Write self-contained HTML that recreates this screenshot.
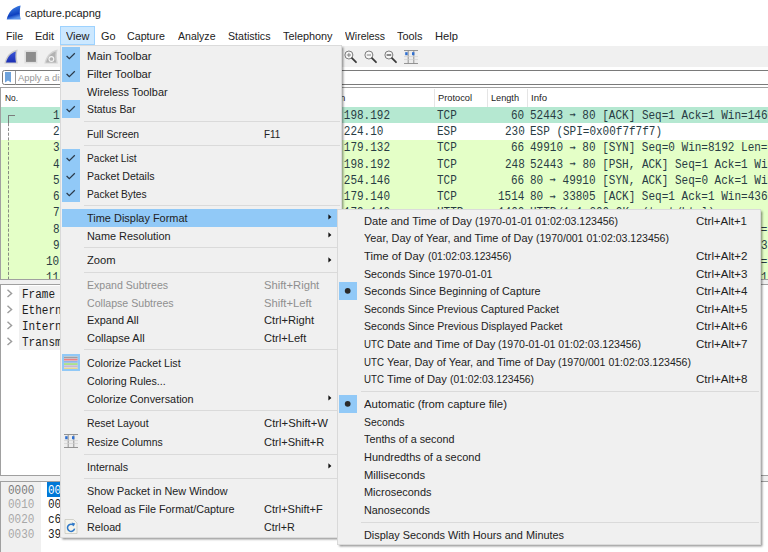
<!DOCTYPE html>
<html lang="en"><head><meta charset="utf-8"><title>capture.pcapng</title>
<style>
html,body{margin:0;padding:0}
body{width:768px;height:552px;overflow:hidden;position:relative;background:#fff;font-family:"Liberation Sans", sans-serif;font-size:12px}
.b{position:absolute;display:block}
.t{position:absolute;white-space:pre;line-height:1;transform-origin:0 0}
.ar{font-family:"DejaVu Sans Mono",monospace;font-size:11px;line-height:0;position:relative;top:-0.5px}
</style></head><body>
<svg class="b" style="left:0;top:0" width="30" height="26" viewBox="0 0 30 26"><defs><linearGradient id="fg" x1="0" y1="0" x2="0.3" y2="1"><stop offset="0" stop-color="#4f95ee"/><stop offset="0.75" stop-color="#0d3fc0"/><stop offset="1" stop-color="#5b93ea"/></linearGradient></defs><path d="M6.7 19.6 C8.2 12.5 12.5 7 20.6 5.4 C19.6 9.5 19.4 14.5 20.8 19.6 Z" fill="url(#fg)"/></svg>
<span class="t" style="left:25.00px;top:7.64px;font-size:11.2px;color:#222;transform:scale(0.9852,1.040);">capture.pcapng</span>
<div class="b" style="left:60.00px;top:26.10px;width:35.00px;height:19.20px;background:#cce8ff;box-shadow:inset 0 0 0 1px #9dd2ff;"></div>
<span class="t" style="left:6.00px;top:31.04px;font-size:11.2px;color:#222;transform:scale(0.9428,1.040);">File</span>
<span class="t" style="left:35.00px;top:31.04px;font-size:11.2px;color:#222;transform:scale(0.9854,1.040);">Edit</span>
<span class="t" style="left:65.50px;top:31.04px;font-size:11.2px;color:#222;transform:scale(0.9773,1.040);">View</span>
<span class="t" style="left:101.00px;top:31.04px;font-size:11.2px;color:#222;transform:scale(0.9707,1.040);">Go</span>
<span class="t" style="left:127.00px;top:31.04px;font-size:11.2px;color:#222;transform:scale(0.9545,1.040);">Capture</span>
<span class="t" style="left:177.50px;top:31.04px;font-size:11.2px;color:#222;transform:scale(0.9419,1.040);">Analyze</span>
<span class="t" style="left:227.50px;top:31.04px;font-size:11.2px;color:#222;transform:scale(0.9494,1.040);">Statistics</span>
<span class="t" style="left:282.50px;top:31.04px;font-size:11.2px;color:#222;transform:scale(0.9703,1.040);">Telephony</span>
<span class="t" style="left:344.50px;top:31.04px;font-size:11.2px;color:#222;transform:scale(0.9326,1.040);">Wireless</span>
<span class="t" style="left:397.00px;top:31.04px;font-size:11.2px;color:#222;transform:scale(0.9761,1.040);">Tools</span>
<span class="t" style="left:434.50px;top:31.04px;font-size:11.2px;color:#222;transform:scale(0.9993,1.040);">Help</span>
<div class="b" style="left:0.00px;top:45.80px;width:768.00px;height:21.40px;background:#f0f0f0;"></div>
<div class="b" style="left:1.60px;top:69.90px;width:790.00px;height:15.20px;background:#fff;border:1px solid #7a7a7a;border-radius:2.5px;box-sizing:border-box;"></div>
<div class="b" style="left:15.20px;top:70.50px;width:0.80px;height:14.00px;background:#9a9a9a;"></div>
<svg class="b" style="left:5px;top:72.3px" width="6" height="10.5" viewBox="0 0 6 10.5"><path d="M0 0H6V10.5L3 8.6L0 10.5Z" fill="#6fa3dc"/></svg>
<span class="t" style="left:17.90px;top:73.62px;font-size:9.2px;color:#979797;transform:scale(1.0242,1.040);">Apply a display filter</span>
<div class="b" style="left:0.00px;top:86.80px;width:768.00px;height:0.90px;background:#a0a0a0;"></div>
<div class="b" style="left:0.00px;top:87.60px;width:768.00px;height:192.00px;background:#fff;"></div>
<div class="b" style="left:1.00px;top:107.25px;width:767.00px;height:15.75px;background:#b5e8d1;"></div>
<div class="b" style="left:1.00px;top:122.90px;width:767.00px;height:17.10px;background:#ffffff;"></div>
<div class="b" style="left:1.00px;top:139.90px;width:767.00px;height:16.20px;background:#e4ffc7;"></div>
<div class="b" style="left:1.00px;top:156.00px;width:767.00px;height:16.35px;background:#e4ffc7;"></div>
<div class="b" style="left:1.00px;top:172.25px;width:767.00px;height:16.35px;background:#e4ffc7;"></div>
<div class="b" style="left:1.00px;top:188.50px;width:767.00px;height:16.35px;background:#e4ffc7;"></div>
<div class="b" style="left:1.00px;top:204.75px;width:767.00px;height:16.35px;background:#e4ffc7;"></div>
<div class="b" style="left:1.00px;top:221.00px;width:767.00px;height:16.35px;background:#e4ffc7;"></div>
<div class="b" style="left:1.00px;top:237.25px;width:767.00px;height:16.35px;background:#e4ffc7;"></div>
<div class="b" style="left:1.00px;top:253.50px;width:767.00px;height:16.35px;background:#e4ffc7;"></div>
<div class="b" style="left:1.00px;top:269.75px;width:767.00px;height:16.35px;background:#e4ffc7;"></div>
<div class="b" style="left:0.00px;top:86.80px;width:1.20px;height:193.00px;background:#a0a0a0;"></div>
<span class="t" style="left:5.00px;top:93.62px;font-size:9.2px;color:#222;transform:scale(0.9083,1.040);">No.</span>
<span class="t" style="left:300.00px;top:93.62px;font-size:9.2px;color:#222;transform:scale(0.9855,1.040);">Destination</span>
<span class="t" style="left:438.00px;top:93.62px;font-size:9.2px;color:#222;transform:scale(1.0083,1.040);">Protocol</span>
<span class="t" style="left:491.00px;top:93.62px;font-size:9.2px;color:#222;transform:scale(0.9961,1.040);">Length</span>
<span class="t" style="left:531.00px;top:93.62px;font-size:9.2px;color:#222;transform:scale(1.0438,1.040);">Info</span>
<div class="b" style="left:434.00px;top:88.50px;width:0.80px;height:18.00px;background:#e5e5e5;"></div>
<div class="b" style="left:486.80px;top:88.50px;width:0.80px;height:18.00px;background:#e5e5e5;"></div>
<div class="b" style="left:527.00px;top:88.50px;width:0.80px;height:18.00px;background:#e5e5e5;"></div>
<span class="t" style="left:53.00px;top:109.85px;font-size:12px;color:#283c44;font-family:'Liberation Mono', monospace;transform:scale(0.9163,1.000);">1</span>
<span class="t" style="left:291.00px;top:109.85px;font-size:12px;color:#283c44;font-family:'Liberation Mono', monospace;transform:scale(0.9164,1.000);">192.168.198.192</span>
<span class="t" style="left:436.60px;top:109.85px;font-size:12px;color:#283c44;font-family:'Liberation Mono', monospace;transform:scale(0.9163,1.000);">TCP</span>
<span class="t" style="left:511.40px;top:109.85px;font-size:12px;color:#283c44;font-family:'Liberation Mono', monospace;transform:scale(0.9163,1.000);">60</span>
<span class="t" style="left:529.60px;top:109.85px;font-size:12px;color:#283c44;font-family:'Liberation Mono', monospace;transform:scale(0.9181,1.000);">52443 <span class="ar">→</span> 80 [ACK] Seq=1 Ack=1 Win=14600 Len=0</span>
<span class="t" style="left:53.00px;top:126.10px;font-size:12px;color:#283c44;font-family:'Liberation Mono', monospace;transform:scale(0.9163,1.000);">2</span>
<span class="t" style="left:291.00px;top:126.10px;font-size:12px;color:#283c44;font-family:'Liberation Mono', monospace;transform:scale(0.9164,1.000);">192.168.224.10 </span>
<span class="t" style="left:436.60px;top:126.10px;font-size:12px;color:#283c44;font-family:'Liberation Mono', monospace;transform:scale(0.9163,1.000);">ESP</span>
<span class="t" style="left:504.80px;top:126.10px;font-size:12px;color:#283c44;font-family:'Liberation Mono', monospace;transform:scale(0.9163,1.000);">230</span>
<span class="t" style="left:529.60px;top:126.10px;font-size:12px;color:#283c44;font-family:'Liberation Mono', monospace;transform:scale(0.9165,1.000);">ESP (SPI=0x00f7f7f7)</span>
<span class="t" style="left:53.00px;top:142.35px;font-size:12px;color:#283c44;font-family:'Liberation Mono', monospace;transform:scale(0.9163,1.000);">3</span>
<span class="t" style="left:291.00px;top:142.35px;font-size:12px;color:#283c44;font-family:'Liberation Mono', monospace;transform:scale(0.9164,1.000);">192.168.179.132</span>
<span class="t" style="left:436.60px;top:142.35px;font-size:12px;color:#283c44;font-family:'Liberation Mono', monospace;transform:scale(0.9163,1.000);">TCP</span>
<span class="t" style="left:511.40px;top:142.35px;font-size:12px;color:#283c44;font-family:'Liberation Mono', monospace;transform:scale(0.9163,1.000);">66</span>
<span class="t" style="left:529.60px;top:142.35px;font-size:12px;color:#283c44;font-family:'Liberation Mono', monospace;transform:scale(0.9180,1.000);">49910 <span class="ar">→</span> 80 [SYN] Seq=0 Win=8192 Len=0 MSS=1460</span>
<span class="t" style="left:53.00px;top:158.60px;font-size:12px;color:#283c44;font-family:'Liberation Mono', monospace;transform:scale(0.9163,1.000);">4</span>
<span class="t" style="left:291.00px;top:158.60px;font-size:12px;color:#283c44;font-family:'Liberation Mono', monospace;transform:scale(0.9164,1.000);">192.168.198.192</span>
<span class="t" style="left:436.60px;top:158.60px;font-size:12px;color:#283c44;font-family:'Liberation Mono', monospace;transform:scale(0.9163,1.000);">TCP</span>
<span class="t" style="left:504.80px;top:158.60px;font-size:12px;color:#283c44;font-family:'Liberation Mono', monospace;transform:scale(0.9163,1.000);">248</span>
<span class="t" style="left:529.60px;top:158.60px;font-size:12px;color:#283c44;font-family:'Liberation Mono', monospace;transform:scale(0.9182,1.000);">52443 <span class="ar">→</span> 80 [PSH, ACK] Seq=1 Ack=1 Win=14600</span>
<span class="t" style="left:53.00px;top:174.85px;font-size:12px;color:#283c44;font-family:'Liberation Mono', monospace;transform:scale(0.9163,1.000);">5</span>
<span class="t" style="left:291.00px;top:174.85px;font-size:12px;color:#283c44;font-family:'Liberation Mono', monospace;transform:scale(0.9164,1.000);">192.168.254.146</span>
<span class="t" style="left:436.60px;top:174.85px;font-size:12px;color:#283c44;font-family:'Liberation Mono', monospace;transform:scale(0.9163,1.000);">TCP</span>
<span class="t" style="left:511.40px;top:174.85px;font-size:12px;color:#283c44;font-family:'Liberation Mono', monospace;transform:scale(0.9163,1.000);">66</span>
<span class="t" style="left:529.60px;top:174.85px;font-size:12px;color:#283c44;font-family:'Liberation Mono', monospace;transform:scale(0.9182,1.000);">80 <span class="ar">→</span> 49910 [SYN, ACK] Seq=0 Ack=1 Win=14600</span>
<span class="t" style="left:53.00px;top:191.10px;font-size:12px;color:#283c44;font-family:'Liberation Mono', monospace;transform:scale(0.9163,1.000);">6</span>
<span class="t" style="left:291.00px;top:191.10px;font-size:12px;color:#283c44;font-family:'Liberation Mono', monospace;transform:scale(0.9164,1.000);">192.168.179.140</span>
<span class="t" style="left:436.60px;top:191.10px;font-size:12px;color:#283c44;font-family:'Liberation Mono', monospace;transform:scale(0.9163,1.000);">TCP</span>
<span class="t" style="left:498.20px;top:191.10px;font-size:12px;color:#283c44;font-family:'Liberation Mono', monospace;transform:scale(0.9163,1.000);">1514</span>
<span class="t" style="left:529.60px;top:191.10px;font-size:12px;color:#283c44;font-family:'Liberation Mono', monospace;transform:scale(0.9181,1.000);">80 <span class="ar">→</span> 33805 [ACK] Seq=1 Ack=1 Win=4360 Len=1460</span>
<span class="t" style="left:53.00px;top:207.35px;font-size:12px;color:#283c44;font-family:'Liberation Mono', monospace;transform:scale(0.9163,1.000);">7</span>
<span class="t" style="left:291.00px;top:207.35px;font-size:12px;color:#283c44;font-family:'Liberation Mono', monospace;transform:scale(0.9164,1.000);">192.168.179.140</span>
<span class="t" style="left:436.60px;top:207.35px;font-size:12px;color:#283c44;font-family:'Liberation Mono', monospace;transform:scale(0.9163,1.000);">HTTP</span>
<span class="t" style="left:498.20px;top:207.35px;font-size:12px;color:#283c44;font-family:'Liberation Mono', monospace;transform:scale(0.9163,1.000);">1400</span>
<span class="t" style="left:529.60px;top:207.35px;font-size:12px;color:#283c44;font-family:'Liberation Mono', monospace;transform:scale(0.9165,1.000);">HTTP/1.1 200 OK  (text/html)</span>
<span class="t" style="left:53.00px;top:223.60px;font-size:12px;color:#283c44;font-family:'Liberation Mono', monospace;transform:scale(0.9163,1.000);">8</span>
<span class="t" style="left:291.00px;top:223.60px;font-size:12px;color:#283c44;font-family:'Liberation Mono', monospace;transform:scale(0.9164,1.000);">192.168.179.132</span>
<span class="t" style="left:436.60px;top:223.60px;font-size:12px;color:#283c44;font-family:'Liberation Mono', monospace;transform:scale(0.9163,1.000);">TCP</span>
<span class="t" style="left:511.40px;top:223.60px;font-size:12px;color:#283c44;font-family:'Liberation Mono', monospace;transform:scale(0.9163,1.000);">66</span>
<span class="t" style="left:529.60px;top:223.60px;font-size:12px;color:#283c44;font-family:'Liberation Mono', monospace;transform:scale(0.9180,1.000);">80 <span class="ar">→</span> 49910 [ACK] Seq=1 Ack=3790 Win=15544 Len=0</span>
<span class="t" style="left:53.00px;top:239.85px;font-size:12px;color:#283c44;font-family:'Liberation Mono', monospace;transform:scale(0.9163,1.000);">9</span>
<span class="t" style="left:291.00px;top:239.85px;font-size:12px;color:#283c44;font-family:'Liberation Mono', monospace;transform:scale(0.9164,1.000);">192.168.254.146</span>
<span class="t" style="left:436.60px;top:239.85px;font-size:12px;color:#283c44;font-family:'Liberation Mono', monospace;transform:scale(0.9163,1.000);">HTTP</span>
<span class="t" style="left:504.80px;top:239.85px;font-size:12px;color:#283c44;font-family:'Liberation Mono', monospace;transform:scale(0.9163,1.000);">431</span>
<span class="t" style="left:529.60px;top:239.85px;font-size:12px;color:#283c44;font-family:'Liberation Mono', monospace;transform:scale(0.9165,1.000);">GET /images/layout/logo.png?v=1.2.13 HTTP/1.1</span>
<span class="t" style="left:46.40px;top:256.10px;font-size:12px;color:#283c44;font-family:'Liberation Mono', monospace;transform:scale(0.9163,1.000);">10</span>
<span class="t" style="left:291.00px;top:256.10px;font-size:12px;color:#283c44;font-family:'Liberation Mono', monospace;transform:scale(0.9164,1.000);">192.168.179.132</span>
<span class="t" style="left:436.60px;top:256.10px;font-size:12px;color:#283c44;font-family:'Liberation Mono', monospace;transform:scale(0.9163,1.000);">TCP</span>
<span class="t" style="left:511.40px;top:256.10px;font-size:12px;color:#283c44;font-family:'Liberation Mono', monospace;transform:scale(0.9163,1.000);">54</span>
<span class="t" style="left:529.60px;top:256.10px;font-size:12px;color:#283c44;font-family:'Liberation Mono', monospace;transform:scale(0.9180,1.000);">80 <span class="ar">→</span> 49910 [ACK] Seq=1 Ack=7580 Win=16616 Len=0</span>
<span class="t" style="left:46.40px;top:272.35px;font-size:12px;color:#283c44;font-family:'Liberation Mono', monospace;transform:scale(0.9163,1.000);">11</span>
<span class="t" style="left:291.00px;top:272.35px;font-size:12px;color:#283c44;font-family:'Liberation Mono', monospace;transform:scale(0.9164,1.000);">192.168.179.140</span>
<span class="t" style="left:436.60px;top:272.35px;font-size:12px;color:#283c44;font-family:'Liberation Mono', monospace;transform:scale(0.9163,1.000);">HTTP</span>
<span class="t" style="left:498.20px;top:272.35px;font-size:12px;color:#283c44;font-family:'Liberation Mono', monospace;transform:scale(0.9163,1.000);">1211</span>
<span class="t" style="left:529.60px;top:272.35px;font-size:12px;color:#283c44;font-family:'Liberation Mono', monospace;transform:scale(0.9165,1.000);">HTTP/1.1 200 OK  (PNG) [size 1211] 1211</span>
<div class="b" style="left:8.10px;top:115.10px;width:7.20px;height:0.80px;background:#7c7c7c;"></div>
<div class="b" style="left:8.10px;top:115.10px;width:0.80px;height:8.00px;background:#7c7c7c;"></div>
<svg class="b" style="left:7px;top:123px" width="3" height="157" viewBox="0 0 3 157"><path d="M1.5 0V157" stroke="#6e6e6e" stroke-width="0.8" stroke-dasharray="3.2 1.6"/></svg>
<div class="b" style="left:0.00px;top:278.80px;width:768.00px;height:1.00px;background:#a0a0a0;"></div>
<div class="b" style="left:0.00px;top:279.80px;width:768.00px;height:4.40px;background:#f0f0f0;"></div>
<div class="b" style="left:0.00px;top:284.20px;width:768.00px;height:192.00px;background:#fff;border:1px solid #a0a0a0;box-sizing:border-box;border-right:0;"></div>
<div class="b" style="left:19.30px;top:285.50px;width:441.60px;height:16.15px;background:#f0f0f0;"></div>
<svg class="b" style="left:6px;top:289.10px" width="8" height="9" viewBox="0 0 8 9"><path d="M1.5 0.7L5.6 4.4L1.5 8.1" fill="none" stroke="#9c9c9c" stroke-width="1.4"/></svg>
<span class="t" style="left:22.00px;top:288.50px;font-size:12px;color:#1c1c1c;font-family:'Liberation Mono', monospace;transform:scale(0.9165,1.000);">Frame 1: 60 bytes on wire (480 bits), 60 bytes captured (480 bits)</span>
<div class="b" style="left:19.30px;top:301.60px;width:395.40px;height:16.15px;background:#f0f0f0;"></div>
<svg class="b" style="left:6px;top:305.20px" width="8" height="9" viewBox="0 0 8 9"><path d="M1.5 0.7L5.6 4.4L1.5 8.1" fill="none" stroke="#9c9c9c" stroke-width="1.4"/></svg>
<span class="t" style="left:22.00px;top:304.60px;font-size:12px;color:#1c1c1c;font-family:'Liberation Mono', monospace;transform:scale(0.9165,1.000);">Ethernet II, Src: 00:0c:29:1f:a7:55, Dst: 00:50:56:c0:00:08</span>
<div class="b" style="left:19.30px;top:317.70px;width:461.40px;height:16.15px;background:#f0f0f0;"></div>
<svg class="b" style="left:6px;top:321.30px" width="8" height="9" viewBox="0 0 8 9"><path d="M1.5 0.7L5.6 4.4L1.5 8.1" fill="none" stroke="#9c9c9c" stroke-width="1.4"/></svg>
<span class="t" style="left:22.00px;top:320.70px;font-size:12px;color:#1c1c1c;font-family:'Liberation Mono', monospace;transform:scale(0.9165,1.000);">Internet Protocol Version 4, Src: 192.168.198.1, Dst: 192.168.198.192</span>
<div class="b" style="left:19.30px;top:333.80px;width:560.40px;height:16.15px;background:#f0f0f0;"></div>
<svg class="b" style="left:6px;top:337.40px" width="8" height="9" viewBox="0 0 8 9"><path d="M1.5 0.7L5.6 4.4L1.5 8.1" fill="none" stroke="#9c9c9c" stroke-width="1.4"/></svg>
<span class="t" style="left:22.00px;top:336.80px;font-size:12px;color:#1c1c1c;font-family:'Liberation Mono', monospace;transform:scale(0.9165,1.000);">Transmission Control Protocol, Src Port: 52443, Dst Port: 80, Seq: 1, Ack: 1, Len: 0</span>
<div class="b" style="left:0.00px;top:476.40px;width:768.00px;height:4.60px;background:#f0f0f0;"></div>
<div class="b" style="left:0.00px;top:481.00px;width:768.00px;height:80.00px;background:#fff;border:1px solid #a0a0a0;box-sizing:border-box;border-right:0;"></div>
<div class="b" style="left:1.00px;top:482.00px;width:39.50px;height:70.00px;background:#f0f0f0;"></div>
<div class="b" style="left:47.00px;top:481.80px;width:120.00px;height:14.80px;background:#0078d7;"></div>
<span class="t" style="left:7.50px;top:484.60px;font-size:12px;color:#7a7a7a;font-family:'Liberation Mono', monospace;transform:scale(0.9163,1.000);">0000</span>
<span class="t" style="left:47.50px;top:484.60px;font-size:12px;color:#fff;font-family:'Liberation Mono', monospace;transform:scale(0.9165,1.000);">00 50 56 c0 00 08</span>
<span class="t" style="left:7.50px;top:499.35px;font-size:12px;color:#a8a8a8;font-family:'Liberation Mono', monospace;transform:scale(0.9163,1.000);">0010</span>
<span class="t" style="left:47.50px;top:499.35px;font-size:12px;color:#1c1c1c;font-family:'Liberation Mono', monospace;transform:scale(0.9165,1.000);">00 2e 1f 3a 40 00</span>
<span class="t" style="left:7.50px;top:514.10px;font-size:12px;color:#a8a8a8;font-family:'Liberation Mono', monospace;transform:scale(0.9163,1.000);">0020</span>
<span class="t" style="left:47.50px;top:514.10px;font-size:12px;color:#1c1c1c;font-family:'Liberation Mono', monospace;transform:scale(0.9165,1.000);">c6 c0 cc db 00 50</span>
<span class="t" style="left:7.50px;top:528.85px;font-size:12px;color:#a8a8a8;font-family:'Liberation Mono', monospace;transform:scale(0.9163,1.000);">0030</span>
<span class="t" style="left:47.50px;top:528.85px;font-size:12px;color:#1c1c1c;font-family:'Liberation Mono', monospace;transform:scale(0.9165,1.000);">39 08 00 00 00 00</span>
<svg class="b" style="left:0;top:46px" width="64" height="22" viewBox="0 46 64 22">
<defs><linearGradient id="tg" x1="0" y1="0" x2="0" y2="1"><stop offset="0" stop-color="#3a55d6"/><stop offset="1" stop-color="#1b2fb4"/></linearGradient></defs>
<path d="M4.4 63.4 C6 56.5 10 51 17.6 49.6 C16.6 54 16.6 58.5 17.8 63.4 Z" fill="#cacaca"/>
<path d="M6 62.4 C7.6 57 10.6 53 15.8 51.4 C15.2 55 15.3 58.6 16 62.4 Z" fill="url(#tg)"/>
<rect x="24.4" y="50.4" width="13" height="13" fill="#dedede"/>
<rect x="26" y="52" width="9.9" height="9.9" fill="#8c8c8c"/>
<path d="M44.4 63.4 C46 56.5 50 51 57.6 49.6 C56.6 54 56.6 58.5 57.8 63.4 Z" fill="#d4d4d4"/>
<path d="M46 62.4 C47.6 57 50.6 53 55.8 51.4 C55.2 55 55.3 58.6 56 62.4 Z" fill="#b2b2b2"/>
<circle cx="51.4" cy="59" r="2.4" fill="none" stroke="#f4f4f4" stroke-width="1.1"/>
</svg>
<svg class="b" style="left:344.4px;top:50px" width="14" height="14" viewBox="0 0 14 14"><circle cx="4.9" cy="5" r="4" fill="#f6f6f6" stroke="#6e6e6e" stroke-width="0.9"/><path d="M8 8.2L12 12.2" stroke="#3c3c3c" stroke-width="1.8" stroke-linecap="round"/><path d="M2.8 5H7M4.9 2.9V7.1" stroke="#777" stroke-width="0.9"/></svg>
<svg class="b" style="left:364.4px;top:50px" width="14" height="14" viewBox="0 0 14 14"><circle cx="4.9" cy="5" r="4" fill="#f6f6f6" stroke="#6e6e6e" stroke-width="0.9"/><path d="M8 8.2L12 12.2" stroke="#3c3c3c" stroke-width="1.8" stroke-linecap="round"/><path d="M2.8 5H7" stroke="#777" stroke-width="0.9"/></svg>
<svg class="b" style="left:384.4px;top:50px" width="14" height="14" viewBox="0 0 14 14"><circle cx="4.9" cy="5" r="4" fill="#f6f6f6" stroke="#6e6e6e" stroke-width="0.9"/><path d="M8 8.2L12 12.2" stroke="#3c3c3c" stroke-width="1.8" stroke-linecap="round"/><path d="M2.6 5H7.2" stroke="#666" stroke-width="1.5"/></svg>
<svg class="b" style="left:404px;top:50px" width="14" height="14" viewBox="0 0 14 14"><rect x="0.3" y="0.6" width="13.4" height="13" fill="#ececec"/><path d="M0 0.5H14M0 13.5H14" stroke="#8a8a8a" stroke-width="0.9"/><path d="M4.2 0.5V13.5M9.8 0.5V13.5" stroke="#8a8a8a" stroke-width="0.9"/><path d="M0 6.5H14M0 9.5H14" stroke="#cfcfcf" stroke-width="0.6"/><rect x="1.2" y="2.2" width="2.4" height="3" fill="#2f6fd0"/><rect x="8" y="2.2" width="2.4" height="3" fill="#2f6fd0"/></svg>
<div class="b" style="left:60.40px;top:45.20px;width:281.40px;height:493.25px;background:#f0f0f0;box-shadow:1.6px 1.6px 2.2px rgba(0,0,0,0.45), inset 0 0 0 0.8px #d4d4d4;"></div><div class="b" style="left:62.00px;top:47.25px;width:17.80px;height:17.60px;background:#91c9f7;"></div><svg class="b" style="left:62.00px;top:47.25px" width="17.6" height="17.6" viewBox="0 0 17.6 17.6"><path d="M4.6 9L7.3 11.6L12.8 6.2" fill="none" stroke="#2b3a4a" stroke-width="1.25"/></svg><span class="t" style="left:87.40px;top:51.49px;font-size:11.2px;color:#222;transform:scale(1.0116,1.040);">Main Toolbar</span><div class="b" style="left:62.00px;top:64.85px;width:17.80px;height:17.60px;background:#91c9f7;"></div><svg class="b" style="left:62.00px;top:64.85px" width="17.6" height="17.6" viewBox="0 0 17.6 17.6"><path d="M4.6 9L7.3 11.6L12.8 6.2" fill="none" stroke="#2b3a4a" stroke-width="1.25"/></svg><span class="t" style="left:87.40px;top:69.09px;font-size:11.2px;color:#222;transform:scale(1.0020,1.040);">Filter Toolbar</span><span class="t" style="left:87.40px;top:86.69px;font-size:11.2px;color:#222;transform:scale(0.9772,1.040);">Wireless Toolbar</span><div class="b" style="left:62.00px;top:100.05px;width:17.80px;height:17.60px;background:#91c9f7;"></div><svg class="b" style="left:62.00px;top:100.05px" width="17.6" height="17.6" viewBox="0 0 17.6 17.6"><path d="M4.6 9L7.3 11.6L12.8 6.2" fill="none" stroke="#2b3a4a" stroke-width="1.25"/></svg><span class="t" style="left:87.40px;top:104.29px;font-size:11.2px;color:#222;transform:scale(0.9304,1.040);">Status Bar</span><div class="b" style="left:84.20px;top:120.75px;width:256.00px;height:0.90px;background:#dadada;"></div><span class="t" style="left:87.40px;top:128.89px;font-size:11.2px;color:#222;transform:scale(0.9206,1.040);">Full Screen</span><span class="t" style="left:263.75px;top:128.89px;font-size:11.2px;color:#222;transform:scale(0.8806,1.040);">F11</span><div class="b" style="left:84.20px;top:145.35px;width:256.00px;height:0.90px;background:#dadada;"></div><div class="b" style="left:62.00px;top:149.25px;width:17.80px;height:17.60px;background:#91c9f7;"></div><svg class="b" style="left:62.00px;top:149.25px" width="17.6" height="17.6" viewBox="0 0 17.6 17.6"><path d="M4.6 9L7.3 11.6L12.8 6.2" fill="none" stroke="#2b3a4a" stroke-width="1.25"/></svg><span class="t" style="left:87.40px;top:153.49px;font-size:11.2px;color:#222;transform:scale(0.9062,1.040);">Packet List</span><div class="b" style="left:62.00px;top:166.85px;width:17.80px;height:17.60px;background:#91c9f7;"></div><svg class="b" style="left:62.00px;top:166.85px" width="17.6" height="17.6" viewBox="0 0 17.6 17.6"><path d="M4.6 9L7.3 11.6L12.8 6.2" fill="none" stroke="#2b3a4a" stroke-width="1.25"/></svg><span class="t" style="left:87.40px;top:171.09px;font-size:11.2px;color:#222;transform:scale(0.9452,1.040);">Packet Details</span><div class="b" style="left:62.00px;top:184.45px;width:17.80px;height:17.60px;background:#91c9f7;"></div><svg class="b" style="left:62.00px;top:184.45px" width="17.6" height="17.6" viewBox="0 0 17.6 17.6"><path d="M4.6 9L7.3 11.6L12.8 6.2" fill="none" stroke="#2b3a4a" stroke-width="1.25"/></svg><span class="t" style="left:87.40px;top:188.69px;font-size:11.2px;color:#222;transform:scale(0.9128,1.040);">Packet Bytes</span><div class="b" style="left:84.20px;top:205.15px;width:256.00px;height:0.90px;background:#dadada;"></div><div class="b" style="left:62.00px;top:209.05px;width:278.20px;height:17.60px;background:#91c9f7;"></div><svg class="b" style="left:327.60px;top:214.35px" width="4" height="6" viewBox="0 0 4 6"><path d="M0.4 0.2L3.4 2.9L0.4 5.6Z" fill="#111"/></svg><span class="t" style="left:87.40px;top:213.29px;font-size:11.2px;color:#222;transform:scale(0.9788,1.040);">Time Display Format</span><svg class="b" style="left:327.60px;top:231.95px" width="4" height="6" viewBox="0 0 4 6"><path d="M0.4 0.2L3.4 2.9L0.4 5.6Z" fill="#111"/></svg><span class="t" style="left:87.40px;top:230.89px;font-size:11.2px;color:#222;transform:scale(0.9740,1.040);">Name Resolution</span><div class="b" style="left:84.20px;top:247.35px;width:256.00px;height:0.90px;background:#dadada;"></div><svg class="b" style="left:327.60px;top:256.55px" width="4" height="6" viewBox="0 0 4 6"><path d="M0.4 0.2L3.4 2.9L0.4 5.6Z" fill="#111"/></svg><span class="t" style="left:87.40px;top:255.49px;font-size:11.2px;color:#222;transform:scale(0.9997,1.040);">Zoom</span><div class="b" style="left:84.20px;top:271.95px;width:256.00px;height:0.90px;background:#dadada;"></div><span class="t" style="left:87.40px;top:280.09px;font-size:11.2px;color:#8f8f8f;transform:scale(0.9447,1.040);">Expand Subtrees</span><span class="t" style="left:263.75px;top:280.09px;font-size:11.2px;color:#8f8f8f;transform:scale(1.0037,1.040);">Shift+Right</span><span class="t" style="left:87.40px;top:297.69px;font-size:11.2px;color:#8f8f8f;transform:scale(0.9473,1.040);">Collapse Subtrees</span><span class="t" style="left:263.75px;top:297.69px;font-size:11.2px;color:#8f8f8f;transform:scale(1.0033,1.040);">Shift+Left</span><span class="t" style="left:87.40px;top:315.29px;font-size:11.2px;color:#222;transform:scale(0.9759,1.040);">Expand All</span><span class="t" style="left:263.75px;top:315.29px;font-size:11.2px;color:#222;transform:scale(0.9988,1.040);">Ctrl+Right</span><span class="t" style="left:87.40px;top:332.89px;font-size:11.2px;color:#222;transform:scale(0.9851,1.040);">Collapse All</span><span class="t" style="left:263.75px;top:332.89px;font-size:11.2px;color:#222;transform:scale(0.9919,1.040);">Ctrl+Left</span><div class="b" style="left:84.20px;top:349.35px;width:256.00px;height:0.90px;background:#dadada;"></div><div class="b" style="left:62.00px;top:353.85px;width:17.80px;height:17.60px;background:#91c9f7;"></div><svg class="b" style="left:64.00px;top:355.85px" width="13.6" height="13.6" viewBox="0 0 13.6 13.6"><rect width="13.6" height="13.6" fill="#d8e4f0"/><rect x="0" y="0.60" width="13.6" height="1.7" fill="#9aa0a6"/><rect x="0" y="2.80" width="13.6" height="1.7" fill="#f08080"/><rect x="0" y="5.00" width="13.6" height="1.7" fill="#8fb4e8"/><rect x="0" y="7.20" width="13.6" height="1.7" fill="#a8e080"/><rect x="0" y="9.40" width="13.6" height="1.7" fill="#c8b8d8"/><rect x="0" y="11.60" width="13.6" height="1.7" fill="#e8d890"/></svg><span class="t" style="left:87.40px;top:358.09px;font-size:11.2px;color:#222;transform:scale(0.9466,1.040);">Colorize Packet List</span><span class="t" style="left:87.40px;top:376.29px;font-size:11.2px;color:#222;transform:scale(0.9504,1.040);">Coloring Rules...</span><svg class="b" style="left:327.60px;top:394.95px" width="4" height="6" viewBox="0 0 4 6"><path d="M0.4 0.2L3.4 2.9L0.4 5.6Z" fill="#111"/></svg><span class="t" style="left:87.40px;top:393.89px;font-size:11.2px;color:#222;transform:scale(0.9685,1.040);">Colorize Conversation</span><div class="b" style="left:84.20px;top:410.35px;width:256.00px;height:0.90px;background:#dadada;"></div><span class="t" style="left:87.40px;top:418.49px;font-size:11.2px;color:#222;transform:scale(0.9342,1.040);">Reset Layout</span><span class="t" style="left:263.75px;top:418.49px;font-size:11.2px;color:#222;transform:scale(1.0091,1.040);">Ctrl+Shift+W</span><svg class="b" style="left:64px;top:434.25000000000017px" width="14" height="14" viewBox="0 0 14 14"><rect x="0.3" y="0.6" width="13.4" height="13" fill="#ececec"/><path d="M0 0.5H14M0 13.5H14" stroke="#8a8a8a" stroke-width="0.9"/><path d="M4.2 0.5V13.5M9.8 0.5V13.5" stroke="#8a8a8a" stroke-width="0.9"/><path d="M0 6.5H14M0 9.5H14" stroke="#cfcfcf" stroke-width="0.6"/><rect x="1.2" y="2.2" width="2.4" height="3" fill="#2f6fd0"/><rect x="8" y="2.2" width="2.4" height="3" fill="#2f6fd0"/></svg><span class="t" style="left:87.40px;top:436.69px;font-size:11.2px;color:#222;transform:scale(0.9281,1.040);">Resize Columns</span><span class="t" style="left:263.75px;top:436.69px;font-size:11.2px;color:#222;transform:scale(0.9887,1.040);">Ctrl+Shift+R</span><div class="b" style="left:84.20px;top:453.75px;width:256.00px;height:0.90px;background:#dadada;"></div><svg class="b" style="left:327.60px;top:462.95px" width="4" height="6" viewBox="0 0 4 6"><path d="M0.4 0.2L3.4 2.9L0.4 5.6Z" fill="#111"/></svg><span class="t" style="left:87.40px;top:461.89px;font-size:11.2px;color:#222;transform:scale(0.9576,1.040);">Internals</span><div class="b" style="left:84.20px;top:478.35px;width:256.00px;height:0.90px;background:#dadada;"></div><span class="t" style="left:87.40px;top:486.49px;font-size:11.2px;color:#222;transform:scale(0.9663,1.040);">Show Packet in New Window</span><span class="t" style="left:87.40px;top:504.09px;font-size:11.2px;color:#222;transform:scale(0.9649,1.040);">Reload as File Format/Capture</span><span class="t" style="left:263.75px;top:504.09px;font-size:11.2px;color:#222;transform:scale(0.9843,1.040);">Ctrl+Shift+F</span><svg class="b" style="left:64.00px;top:519.35px" width="14" height="15" viewBox="0 0 14 15"><path d="M1 0.5H9.5L13 4V14.5H1Z" fill="#f4f4ec" stroke="#c8c8c0" stroke-width="0.8"/><path d="M9.6 6.2A3.6 3.6 0 1 0 10.6 9.6" fill="none" stroke="#2f78c8" stroke-width="1.5"/><path d="M7.6 3.6L11.2 4.6L9.6 7.6Z" fill="#2f78c8"/></svg><span class="t" style="left:87.40px;top:522.29px;font-size:11.2px;color:#222;transform:scale(0.9618,1.040);">Reload</span><span class="t" style="left:263.75px;top:522.29px;font-size:11.2px;color:#222;transform:scale(0.9605,1.040);">Ctrl+R</span>
<div class="b" style="left:337.20px;top:209.00px;width:423.40px;height:336.00px;background:#f0f0f0;box-shadow:1.6px 1.6px 2.2px rgba(0,0,0,0.45), inset 0 0 0 0.8px #d4d4d4;"></div><span class="t" style="left:364.00px;top:215.84px;font-size:11.2px;color:#222;transform:scale(0.9972,1.040);">Date and Time of Day </span><span class="t" style="left:475.00px;top:215.84px;font-size:11.2px;color:#222;transform:scale(0.9421,1.040);">(1970-01-01 01:02:03.123456)</span><span class="t" style="left:695.80px;top:215.84px;font-size:11.2px;color:#222;transform:scale(1.0251,1.040);">Ctrl+Alt+1</span><span class="t" style="left:364.00px;top:233.44px;font-size:11.2px;color:#222;transform:scale(0.9761,1.040);">Year, Day of Year, and Time of Day </span><span class="t" style="left:536.00px;top:233.44px;font-size:11.2px;color:#222;transform:scale(0.9418,1.040);">(1970/001 01:02:03.123456)</span><span class="t" style="left:364.00px;top:251.04px;font-size:11.2px;color:#222;transform:scale(1.0079,1.040);">Time of Day </span><span class="t" style="left:427.50px;top:251.04px;font-size:11.2px;color:#222;transform:scale(0.9130,1.040);">(01:02:03.123456)</span><span class="t" style="left:695.80px;top:251.04px;font-size:11.2px;color:#222;transform:scale(1.0332,1.040);">Ctrl+Alt+2</span><span class="t" style="left:364.00px;top:268.64px;font-size:11.2px;color:#222;transform:scale(0.9521,1.040);">Seconds Since 1970-01-01</span><span class="t" style="left:695.80px;top:268.64px;font-size:11.2px;color:#222;transform:scale(1.0332,1.040);">Ctrl+Alt+3</span><div class="b" style="left:339.00px;top:282.00px;width:17.60px;height:17.60px;background:#91c9f7;"></div><svg class="b" style="left:339.00px;top:282.00px" width="17.6" height="17.6" viewBox="0 0 17.6 17.6"><circle cx="8.7" cy="8.8" r="2.9" fill="#2a2a2a"/></svg><span class="t" style="left:364.00px;top:286.24px;font-size:11.2px;color:#222;transform:scale(0.9652,1.040);">Seconds Since Beginning of Capture</span><span class="t" style="left:695.80px;top:286.24px;font-size:11.2px;color:#222;transform:scale(1.0332,1.040);">Ctrl+Alt+4</span><span class="t" style="left:364.00px;top:303.84px;font-size:11.2px;color:#222;transform:scale(0.9388,1.040);">Seconds Since Previous Captured Packet</span><span class="t" style="left:695.80px;top:303.84px;font-size:11.2px;color:#222;transform:scale(1.0332,1.040);">Ctrl+Alt+5</span><span class="t" style="left:364.00px;top:321.44px;font-size:11.2px;color:#222;transform:scale(0.9416,1.040);">Seconds Since Previous Displayed Packet</span><span class="t" style="left:695.80px;top:321.44px;font-size:11.2px;color:#222;transform:scale(1.0332,1.040);">Ctrl+Alt+6</span><span class="t" style="left:364.00px;top:339.04px;font-size:11.2px;color:#222;transform:scale(0.8656,1.040);">UTC </span><span class="t" style="left:386.60px;top:339.04px;font-size:11.2px;color:#222;transform:scale(1.0008,1.040);">Date and Time of Day </span><span class="t" style="left:498.00px;top:339.04px;font-size:11.2px;color:#222;transform:scale(0.9421,1.040);">(1970-01-01 01:02:03.123456)</span><span class="t" style="left:695.80px;top:339.04px;font-size:11.2px;color:#222;transform:scale(1.0332,1.040);">Ctrl+Alt+7</span><span class="t" style="left:364.00px;top:356.64px;font-size:11.2px;color:#222;transform:scale(0.8656,1.040);">UTC </span><span class="t" style="left:386.60px;top:356.64px;font-size:11.2px;color:#222;transform:scale(0.9727,1.040);">Year, Day of Year, and Time of Day </span><span class="t" style="left:558.00px;top:356.64px;font-size:11.2px;color:#222;transform:scale(0.9418,1.040);">(1970/001 01:02:03.123456)</span><span class="t" style="left:364.00px;top:374.24px;font-size:11.2px;color:#222;transform:scale(0.8656,1.040);">UTC </span><span class="t" style="left:386.60px;top:374.24px;font-size:11.2px;color:#222;transform:scale(0.9984,1.040);">Time of Day </span><span class="t" style="left:449.50px;top:374.24px;font-size:11.2px;color:#222;transform:scale(0.9185,1.040);">(01:02:03.123456)</span><span class="t" style="left:695.80px;top:374.24px;font-size:11.2px;color:#222;transform:scale(1.0332,1.040);">Ctrl+Alt+8</span><div class="b" style="left:361.40px;top:390.90px;width:397.20px;height:0.90px;background:#dadada;"></div><div class="b" style="left:339.00px;top:395.00px;width:17.60px;height:17.60px;background:#91c9f7;"></div><svg class="b" style="left:339.00px;top:395.00px" width="17.6" height="17.6" viewBox="0 0 17.6 17.6"><circle cx="8.7" cy="8.8" r="2.9" fill="#2a2a2a"/></svg><span class="t" style="left:364.00px;top:399.24px;font-size:11.2px;color:#222;transform:scale(1.0177,1.040);">Automatic (from capture file)</span><span class="t" style="left:364.00px;top:416.84px;font-size:11.2px;color:#222;transform:scale(0.9300,1.040);">Seconds</span><span class="t" style="left:364.00px;top:434.44px;font-size:11.2px;color:#222;transform:scale(0.9636,1.040);">Tenths of a second</span><span class="t" style="left:364.00px;top:452.04px;font-size:11.2px;color:#222;transform:scale(0.9807,1.040);">Hundredths of a second</span><span class="t" style="left:364.00px;top:469.64px;font-size:11.2px;color:#222;transform:scale(1.0010,1.040);">Milliseconds</span><span class="t" style="left:364.00px;top:487.24px;font-size:11.2px;color:#222;transform:scale(0.9780,1.040);">Microseconds</span><span class="t" style="left:364.00px;top:504.84px;font-size:11.2px;color:#222;transform:scale(0.9646,1.040);">Nanoseconds</span><div class="b" style="left:361.40px;top:521.50px;width:397.20px;height:0.90px;background:#dadada;"></div><span class="t" style="left:364.00px;top:529.84px;font-size:11.2px;color:#222;transform:scale(0.9717,1.040);">Display Seconds With Hours and Minutes</span>
</body></html>
